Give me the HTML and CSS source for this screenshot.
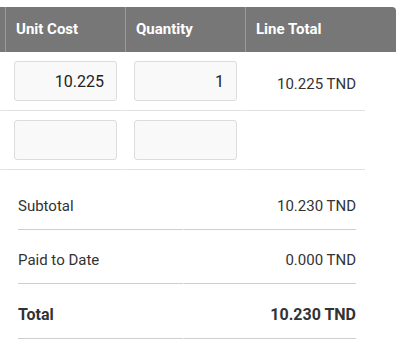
FILE: index.html
```html
<!DOCTYPE html>
<html lang="en">
<head>
  <meta charset="UTF-8">
  <meta name="viewport" content="width=device-width, initial-scale=1.0">
  <title>Invoice items</title>
  <link rel="stylesheet" href="styles.css">
</head>
<body>
  <table class="items">
    <colgroup>
      <col class="c-item">
      <col class="c-num">
      <col class="c-num">
      <col class="c-num">
      <col class="c-del">
    </colgroup>
    <thead>
      <tr>
        <th class="edge"></th>
        <th>Unit Cost</th>
        <th>Quantity</th>
        <th>Line Total</th>
        <th class="last"></th>
      </tr>
    </thead>
    <tbody>
      <tr>
        <td class="edge"></td>
        <td><input class="field" type="text" value="10.225"></td>
        <td><input class="field" type="text" value="1"></td>
        <td class="amount">10.225 TND</td>
        <td class="last"></td>
      </tr>
      <tr>
        <td class="edge"></td>
        <td><input class="field" type="text" value=""></td>
        <td><input class="field" type="text" value=""></td>
        <td class="amount"></td>
        <td class="last"></td>
      </tr>
    </tbody>
  </table>

  <table class="totals">
    <tr>
      <td class="label">Subtotal</td>
      <td class="value">10.230 TND</td>
    </tr>
    <tr>
      <td class="label">Paid to Date</td>
      <td class="value">0.000 TND</td>
    </tr>
    <tr class="grand">
      <td class="label">Total</td>
      <td class="value">10.230 TND</td>
    </tr>
  </table>
</body>
</html>
```

FILE: styles.css
```css
body { margin: 0; background: #fff; font-family: Roboto, "Liberation Sans", sans-serif; color: #333; }

.items {
  margin-top: 7px;
  width: 396px;
  table-layout: fixed;
  border-collapse: separate;
  border-spacing: 0;
}
.c-item { width: 5px; }
.c-num { width: 120px; }
.c-del { width: 31px; }

.items th {
  background: #777;
  color: #fff;
  font-size: 15px;
  font-weight: bold;
  text-align: left;
  line-height: 21px;
  padding: 12px 10px;
  border-left: 1px solid #9a9a9a;
  white-space: nowrap;
}
.items th.edge { padding: 0; border-left: 0; }
.items th.last { border-left: 0; border-top-right-radius: 4px; padding: 0; }

.items td {
  padding: 9px 8px;
  border-bottom: 1px solid #e0e0e0;
  border-left: 1px solid #fff;
  vertical-align: top;
}
.items td.edge { padding: 0; border-left: 0; }
.items td.last { border-bottom: 0; padding: 0; }
.items td.amount {
  text-align: right;
  font-size: 15px;
  line-height: 20px;
  padding: 22px 9px 0 0;
}

.field {
  display: block;
  box-sizing: border-box;
  width: 100%;
  height: 40px;
  margin: 0;
  padding: 0 12px;
  background: #f9f9f9;
  border: 1px solid #dcdcdc;
  border-radius: 3px;
  font-family: inherit;
  font-size: 16px;
  color: #222;
  text-align: right;
}

.totals {
  margin: 6px 0 0 18px;
  width: 338px;
  table-layout: fixed;
  border-collapse: separate;
  border-spacing: 0;
  font-size: 15px;
}
.totals td {
  padding: 20px 0 13px;
  line-height: 20px;
  border-bottom: 1px solid #cfcfcf;
}
.totals .label { width: 165px; }
.totals .value { text-align: right; border-left: 1px solid #fff; }
.totals .grand td { font-weight: bold; font-size: 16px; line-height: 21px; }
```
